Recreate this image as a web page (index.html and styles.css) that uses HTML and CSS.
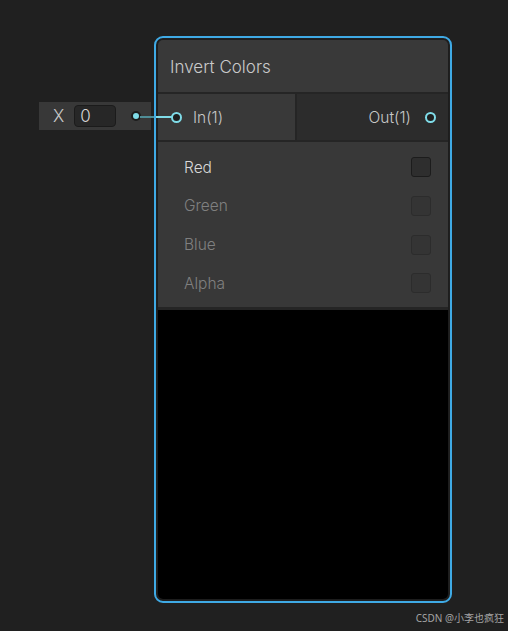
FILE: index.html
```
<!DOCTYPE html>
<html lang="en">
<head>
  <meta charset="UTF-8" />
  <title>Invert Colors</title>
  <link rel="stylesheet" href="styles.css">
</head>
<body>
  <div class="graph">
    <div class="field-node">
      <span class="field-label">X</span>
      <span class="field-input">0</span>
      <span class="field-dot"></span>
    </div>

    <div class="node selected">
      <div class="node-body">
        <div class="node-title">Invert Colors</div>
        <div class="node-ports">
          <div class="port port-in"><span class="port-ring"></span>In(1)</div>
          <div class="port port-out">Out(1)<span class="port-ring"></span></div>
        </div>
        <div class="node-settings">
          <div class="toggle-row on">Red <span class="checkbox"></span></div>
          <div class="toggle-row">Green <span class="checkbox"></span></div>
          <div class="toggle-row">Blue <span class="checkbox"></span></div>
          <div class="toggle-row">Alpha <span class="checkbox"></span></div>
        </div>
        <div class="node-preview"></div>
      </div>
    </div>

    <!-- edge from X field to In(1) -->
    <svg class="edge" width="32" height="2" viewBox="0 0 32 2">
      <rect x="0" y="0" width="14" height="2" fill="#4f8d96" />
      <rect x="16" y="0" width="16" height="2" fill="#7fdce8" />
    </svg>

    <div class="watermark">CSDN @小李也疯狂</div>
  </div>
</body>
</html>
```

FILE: styles.css
```
body {
  margin: 0;
  background: #202020;
  font-family: Inter, "Noto Sans", sans-serif;
  font-weight: 300;
}
.graph {
  position: relative;
  width: 508px;
  height: 631px;
  overflow: hidden;
}

/* node on the graph canvas */
.node {
  position: absolute;
  left: 154px;
  top: 36px;
  width: 298px;
  height: 567px;
  box-sizing: border-box;
  border: 2px solid #3faae5;
  border-radius: 9px;
  padding: 1px;
}
.node-body {
  height: 100%;
  box-sizing: border-box;
  display: flex;
  flex-direction: column;
  background: #242424;
  border: 1px solid #1d1d1d;
  border-radius: 6px;
  overflow: hidden;
}
.node-title {
  height: 52px;
  line-height: 54px;
  padding-left: 12px;
  background: #393939;
  border-bottom: 2px solid #252525;
  color: #cacaca;
  font-size: 17px;
}
.node-ports {
  display: flex;
  height: 46px;
  border-bottom: 2px solid #252525;
}
.port {
  display: flex;
  align-items: center;
  font-size: 15.5px;
  color: #c8c8c8;
}
.port-in {
  width: 139px;
  padding-left: 13px;
  gap: 11px;
  box-sizing: border-box;
  background: #393939;
  border-right: 2px solid #252525;
}
.port-out {
  flex: 1;
  justify-content: flex-end;
  padding-right: 12px;
  gap: 14px;
  background: #2c2c2c;
}
.port-ring {
  width: 11px;
  height: 11px;
  box-sizing: border-box;
  border: 2px solid #7fdce8;
  border-radius: 50%;
  background: #1f1f1f;
}
.node-settings {
  background: #383838;
  padding: 6px 0 4px;
  border-bottom: 3px solid #252525;
}
.toggle-row {
  height: 38.67px;
  display: flex;
  align-items: center;
  justify-content: space-between;
  padding: 0 17px 0 26px;
  font-size: 15.5px;
  color: #808080;
}
.toggle-row.on {
  color: #d8d8d8;
}
.checkbox {
  width: 20px;
  height: 20px;
  box-sizing: border-box;
  background: #343434;
  border: 1px solid #2c2c2c;
  border-radius: 3px;
}
.toggle-row.on .checkbox {
  background: #2e2e2e;
  border-color: #1c1c1c;
}
.node-preview {
  flex: 1;
  background: #000;
}

/* property field node */
.field-node {
  position: absolute;
  left: 39px;
  top: 102px;
  width: 112px;
  height: 28px;
  display: flex;
  align-items: center;
  background: #383838;
  font-size: 17px;
}
.field-label {
  margin-left: 14px;
  color: #c8c8c8;
}
.field-input {
  width: 42px;
  height: 22px;
  margin-left: 10px;
  padding-left: 5px;
  box-sizing: border-box;
  background: #272727;
  border: 1px solid #1b1b1b;
  border-radius: 4px;
  line-height: 20px;
  color: #d6d6d6;
}
.field-dot {
  width: 10px;
  height: 10px;
  margin-left: auto;
  margin-right: 10px;
  box-sizing: border-box;
  border: 2px solid #1c1c1c;
  border-radius: 50%;
  background: #7fdce8;
}

.edge {
  position: absolute;
  left: 140px;
  top: 116px;
}

.watermark {
  position: absolute;
  right: 4px;
  bottom: 6px;
  font-family: "Noto Sans", "Noto Sans CJK SC", sans-serif;
  font-weight: 400;
  font-size: 10px;
  color: #a4a4a4;
}
```
